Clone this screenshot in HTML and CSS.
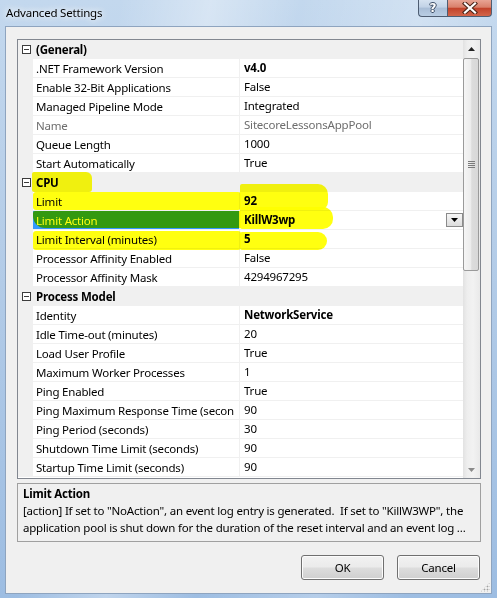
FILE: index.html
```html
<!DOCTYPE html>
<html>
<head>
<meta charset="utf-8">
<title>Advanced Settings</title>
<link rel="stylesheet" href="styles.css">
</head>
<body>
<div class="window">
  <div class="titlebar">
    <span class="title">Advanced Settings</span>
    <div class="caption">
      <div class="cbtn help"><span class="q">?</span></div>
      <div class="cbtn close">
        <svg width="16" height="12" viewBox="0 0 16 12"><path d="M3 1.5 L13 10.5 M13 1.5 L3 10.5" stroke="#4a2418" stroke-width="4.2" stroke-linecap="square"/><path d="M3 1.5 L13 10.5 M13 1.5 L3 10.5" stroke="#ffffff" stroke-width="2.2" stroke-linecap="square"/></svg>
      </div>
    </div>
  </div>
  <div class="client">
    <div class="pgrid">
      <div class="rows">
        <div class="cat"><span class="gut"><span class="box"></span></span><span class="cat-label">(General)</span></div>
        <div class="row"><span class="gut"></span><span class="name">.NET Framework Version</span><span class="val b">v4.0</span></div>
        <div class="row"><span class="gut"></span><span class="name">Enable 32-Bit Applications</span><span class="val">False</span></div>
        <div class="row"><span class="gut"></span><span class="name">Managed Pipeline Mode</span><span class="val">Integrated</span></div>
        <div class="row ro"><span class="gut"></span><span class="name">Name</span><span class="val">SitecoreLessonsAppPool</span></div>
        <div class="row"><span class="gut"></span><span class="name">Queue Length</span><span class="val">1000</span></div>
        <div class="row"><span class="gut"></span><span class="name">Start Automatically</span><span class="val">True</span></div>
        <div class="cat"><span class="gut"><span class="box"></span></span><span class="cat-label">CPU</span></div>
        <div class="row"><span class="gut"></span><span class="name">Limit</span><span class="val b">92</span></div>
        <div class="row sel"><span class="gut"></span><span class="name">Limit Action</span><span class="val b"><span>KillW3wp</span><span class="dd"><svg width="7" height="4" viewBox="0 0 7 4"><path d="M0 0 H7 L3.5 4 Z" fill="#000"/></svg></span></span></div>
        <div class="row"><span class="gut"></span><span class="name">Limit Interval (minutes)</span><span class="val b">5</span></div>
        <div class="row"><span class="gut"></span><span class="name">Processor Affinity Enabled</span><span class="val">False</span></div>
        <div class="row"><span class="gut"></span><span class="name">Processor Affinity Mask</span><span class="val">4294967295</span></div>
        <div class="cat"><span class="gut"><span class="box"></span></span><span class="cat-label">Process Model</span></div>
        <div class="row"><span class="gut"></span><span class="name">Identity</span><span class="val b">NetworkService</span></div>
        <div class="row"><span class="gut"></span><span class="name">Idle Time-out (minutes)</span><span class="val">20</span></div>
        <div class="row"><span class="gut"></span><span class="name">Load User Profile</span><span class="val">True</span></div>
        <div class="row"><span class="gut"></span><span class="name">Maximum Worker Processes</span><span class="val">1</span></div>
        <div class="row"><span class="gut"></span><span class="name">Ping Enabled</span><span class="val">True</span></div>
        <div class="row"><span class="gut"></span><span class="name">Ping Maximum Response Time (secon</span><span class="val">90</span></div>
        <div class="row"><span class="gut"></span><span class="name">Ping Period (seconds)</span><span class="val">30</span></div>
        <div class="row"><span class="gut"></span><span class="name">Shutdown Time Limit (seconds)</span><span class="val">90</span></div>
        <div class="row"><span class="gut"></span><span class="name">Startup Time Limit (seconds)</span><span class="val">90</span></div>

        <div class="hl hl-cpu"></div>
        <div class="hl hl-limit-n"></div>
        <div class="hl hl-limit-v"></div>
        <div class="hl hl-action-n"></div>
        <div class="hl hl-action-v"></div>
        <div class="hl hl-int-n"></div>
        <div class="hl hl-int-v"></div>
      </div>
      <div class="vscroll">
        <div class="sb-btn"><svg width="7" height="4" viewBox="0 0 7 4"><path d="M0 4 H7 L3.5 0 Z" fill="#222"/></svg></div>
        <div class="thumb"><span class="grip"></span></div>
        <div class="track"></div>
        <div class="sb-btn"><svg width="7" height="4" viewBox="0 0 7 4"><path d="M0 0 H7 L3.5 4 Z" fill="#8a8a8a"/></svg></div>
      </div>
    </div>
    <div class="desc">
      <div class="desc-title">Limit Action</div>
      <div class="desc-line">[action] If set to "NoAction", an event log entry is generated.&nbsp; If set to "KillW3WP", the</div>
      <div class="desc-line">application pool is shut down for the duration of the reset interval and an event log ...</div>
    </div>
    <div class="actions">
      <button class="btn">OK</button>
      <button class="btn">Cancel</button>
    </div>
    <div class="sizegrip"></div>
  </div>
</div>
</body>
</html>
```
FILE: styles.css
```css
html, body {
  margin: 0;
  padding: 0;
}
body {
  width: 497px;
  height: 598px;
  overflow: hidden;
  font-family: "Noto Sans", "Open Sans", "DejaVu Sans", sans-serif;
  font-size: 11.5px;
  letter-spacing: -0.2px;
  color: #000;
}
.window {
  width: 497px;
  height: 598px;
  display: flex;
  flex-direction: column;
  background:
    linear-gradient(100deg, rgba(255,255,255,0) 20%, rgba(255,255,255,0.35) 35%, rgba(255,255,255,0) 50%, rgba(255,255,255,0.25) 70%, rgba(255,255,255,0) 85%),
    linear-gradient(to bottom, #c3d8ee 0%, #b5cde8 40%, #9dbde2 100%);
}
.titlebar {
  height: 26px;
  flex: none;
  display: flex;
  justify-content: space-between;
  align-items: flex-start;
  padding: 0 5px 0 6px;
}
.title {
  line-height: 26px;
  color: #000;
  text-shadow: 0 0 6px #fff, 0 0 10px #fff;
}
.caption {
  display: flex;
}
.cbtn {
  height: 17px;
  box-sizing: border-box;
  border: 1px solid #4e5d72;
  border-top: none;
  display: flex;
  align-items: center;
  justify-content: center;
}
.help {
  width: 29px;
  border-right: none;
  border-radius: 0 0 0 4px;
  background: linear-gradient(to bottom, #d5e2f0 0%, #c1d2e6 45%, #a8bdd6 50%, #b9cde3 100%);
}
.q {
  font-family: "DejaVu Sans", sans-serif;
  font-weight: bold;
  font-size: 12px;
  line-height: 14px;
  letter-spacing: 0;
  color: #fff;
  text-shadow: 1px 0 0 #3c4d66, -1px 0 0 #3c4d66, 0 1px 0 #3c4d66, 0 -1px 0 #3c4d66;
}
.close {
  width: 45px;
  border-radius: 0 0 4px 0;
  background: linear-gradient(to bottom, #e8a494 0%, #d9806b 45%, #c2432b 52%, #d2654a 100%);
}
.client {
  flex: 1;
  margin: 0 5px 4px 5px;
  background: #f0f0f0;
  border: 1px solid #8ea4bf;
  padding: 12px 10px 0 11px;
  display: flex;
  flex-direction: column;
  position: relative;
}
.pgrid {
  height: 440px;
  flex: none;
  box-sizing: border-box;
  border: 1px solid #828790;
  background: #fff;
  display: flex;
}
.rows {
  width: 445px;
  position: relative;
  overflow: hidden;
}
.row, .cat {
  display: grid;
  height: 19px;
  box-sizing: border-box;
  border-bottom: 1px solid #f0f0f0;
  line-height: 20px;
}
.row {
  grid-template-columns: 15px 207px 1fr;
}
.cat {
  grid-template-columns: 15px 1fr;
  background: #f0f0f0;
  font-weight: bold;
}
.gut {
  background: #f0f0f0;
  display: flex;
  align-items: center;
  justify-content: center;
}
.box {
  width: 9px;
  height: 9px;
  box-sizing: border-box;
  border: 1px solid #3c3c3c;
  background: linear-gradient(#3c3c3c, #3c3c3c) center / 5px 1px no-repeat, #fff;
  margin-left: 1px;
}
.cat-label {
  padding-left: 3px;
  overflow: hidden;
}
.name {
  padding-left: 3px;
  border-right: 1px solid #f0f0f0;
  white-space: nowrap;
  overflow: hidden;
}
.val {
  padding-left: 4px;
  white-space: nowrap;
  overflow: hidden;
  display: flex;
  justify-content: space-between;
  align-items: center;
}
.b {
  font-weight: bold;
}
.ro .name, .ro .val {
  color: #6d6d6d;
}
.sel .name {
  background: #3399ff;
  color: #fff;
}
.dd {
  width: 17px;
  height: 14px;
  box-sizing: border-box;
  border: 1px solid #8a8a8a;
  background: linear-gradient(to bottom, #f6f6f6, #dcdcdc);
  display: flex;
  align-items: center;
  justify-content: center;
  margin-top: -1px;
}
.hl {
  position: absolute;
  background: #ffff10;
  mix-blend-mode: multiply;
  border-radius: 3px;
}
.hl-cpu { left: 14px; top: 132px; width: 60px; height: 20px; border-radius: 2px 6px 3px 2px; }
.hl-limit-n { left: 15px; top: 152px; width: 208px; height: 18px; }
.hl-limit-v { left: 222px; top: 144px; width: 88px; height: 26px; border-radius: 2px 10px 8px 2px; }
.hl-action-n { left: 15px; top: 171px; width: 208px; height: 17px; border-radius: 2px 0 0 12px; }
.hl-action-v { left: 222px; top: 167px; width: 93px; height: 22px; border-radius: 2px 10px 10px 2px; }
.hl-int-n { left: 15px; top: 191px; width: 208px; height: 19px; }
.hl-int-v { left: 222px; top: 192px; width: 87px; height: 18px; border-radius: 2px 9px 9px 2px; }
.vscroll {
  width: 17px;
  display: flex;
  flex-direction: column;
  background: linear-gradient(to right, #e2e2e2 0%, #eeeeee 25%, #f2f2f2 60%, #e9e9e9 100%);
}
.sb-btn {
  height: 17px;
  flex: none;
  display: flex;
  align-items: center;
  justify-content: center;
}
.thumb {
  margin-top: 1px;
  height: 213px;
  width: 16px;
  flex: none;
  box-sizing: border-box;
  border: 1px solid #9a9a9a;
  border-radius: 2px;
  background: linear-gradient(to right, #f5f5f5 0%, #ececec 50%, #dcdcdc 55%, #d8d8d8 100%);
  display: flex;
  align-items: center;
  justify-content: center;
}
.grip {
  width: 7px;
  height: 7px;
  background: repeating-linear-gradient(to bottom, #7a7a7a 0 1px, transparent 1px 2px);
}
.track {
  flex: 1;
}
.desc {
  margin-top: 4px;
  height: 59px;
  flex: none;
  box-sizing: border-box;
  border: 1px solid #a0a0a0;
  padding: 1px 4px 0 5px;
  line-height: 17px;
}
.desc-title {
  font-weight: bold;
}
.desc-line {
  white-space: nowrap;
}
.actions {
  margin-top: 13px;
  display: flex;
  justify-content: flex-end;
  gap: 13px;
  padding-right: 1px;
}
.btn {
  width: 83px;
  height: 25px;
  box-sizing: border-box;
  border: 1px solid #707070;
  border-radius: 3px;
  background: linear-gradient(to bottom, #f2f2f2 0%, #ebebeb 48%, #dddddd 52%, #cfcfcf 100%);
  font-family: "Noto Sans", "Open Sans", sans-serif;
  font-size: 11.5px;
  letter-spacing: -0.2px;
  color: #000;
  padding: 0;
  box-shadow: inset 0 0 0 1px #fcfcfc;
}
.sizegrip {
  position: absolute;
  right: 1px;
  bottom: 1px;
  width: 10px;
  height: 10px;
  background:
    radial-gradient(circle, #a0a0a0 0.8px, transparent 1.1px) 0 0 / 3px 3px;
  clip-path: polygon(100% 0, 100% 100%, 0 100%);
}
```
